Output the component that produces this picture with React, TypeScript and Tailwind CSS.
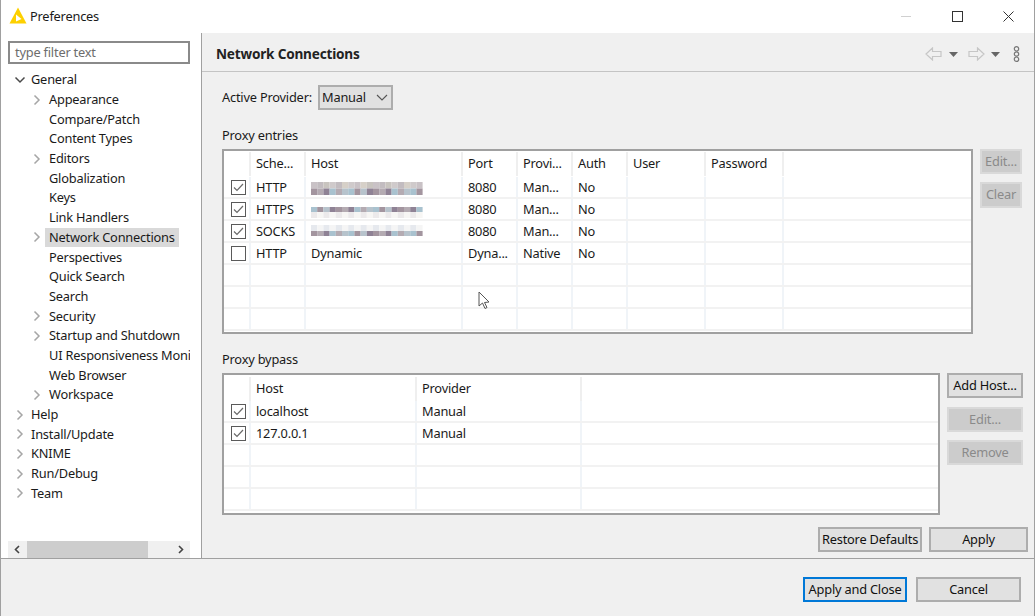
import React from "react";

const font = { fontFamily: '"Noto Sans","Liberation Sans",sans-serif' };

function Chevron({ open = false }: { open?: boolean }) {
  return (
    <svg width="12" height="12" viewBox="0 0 12 12" className="shrink-0">
      {open ? (
        <path d="M1.5 3.5 L6 8 L10.5 3.5" fill="none" stroke="#4a4a4a" strokeWidth="1.5" />
      ) : (
        <path d="M3.5 1.5 L8 6 L3.5 10.5" fill="none" stroke="#a6a6a6" strokeWidth="1.5" />
      )}
    </svg>
  );
}

const tree: { t: string; d: number; c?: boolean; open?: boolean; sel?: boolean }[] = [
  { t: "General", d: 0, c: true, open: true },
  { t: "Appearance", d: 1, c: true },
  { t: "Compare/Patch", d: 1 },
  { t: "Content Types", d: 1 },
  { t: "Editors", d: 1, c: true },
  { t: "Globalization", d: 1 },
  { t: "Keys", d: 1 },
  { t: "Link Handlers", d: 1 },
  { t: "Network Connections", d: 1, c: true, sel: true },
  { t: "Perspectives", d: 1 },
  { t: "Quick Search", d: 1 },
  { t: "Search", d: 1 },
  { t: "Security", d: 1, c: true },
  { t: "Startup and Shutdown", d: 1, c: true },
  { t: "UI Responsiveness Monitoring", d: 1 },
  { t: "Web Browser", d: 1 },
  { t: "Workspace", d: 1, c: true },
  { t: "Help", d: 0, c: true },
  { t: "Install/Update", d: 0, c: true },
  { t: "KNIME", d: 0, c: true },
  { t: "Run/Debug", d: 0, c: true },
  { t: "Team", d: 0, c: true },
];

function Check({ on }: { on: boolean }) {
  return (
    <svg width="15" height="15" viewBox="0 0 15 15" className="shrink-0">
      <rect x="0.5" y="0.5" width="14" height="14" fill="#fff" stroke="#5a5a5a" />
      {on && <path d="M3 7.5 L6 10.5 L12 4" fill="none" stroke="#6a6a6a" strokeWidth="1.2" />}
    </svg>
  );
}

const dark = ["#c9c2c6", "#b4abb2", "#cfcacb", "#a3959f", "#c8c4bf", "#a9c2cf", "#d6d0c8", "#8f8295", "#c2bcc0", "#b7c3cc"];
const light = ["#f3f1f1", "#eceaeb", "#f7f6f4", "#e6e9ee", "#f5f5f5", "#e3edf4", "#f1ede8"];

const bands: { y: number; h: number; pal: string[] }[][] = [
  [
    { y: 4, h: 6.5, pal: dark },
    { y: 10.5, h: 6.5, pal: dark },
  ],
  [
    { y: 7, h: 5, pal: dark },
    { y: 12, h: 6, pal: light },
  ],
  [
    { y: 3, h: 6, pal: light },
    { y: 9, h: 5, pal: dark },
  ],
];

function Mosaic({ seed }: { seed: number }) {
  const cells: React.ReactNode[] = [];
  bands[seed].forEach((b, r) => {
    for (let c = 0; c < 18; c++) {
      const i = (c * 7 + r * 3 + seed * 5 + (c * c) % 4) % b.pal.length;
      cells.push(<rect key={c + "-" + r} x={c * 6.2} y={b.y} width="6.2" height={b.h} fill={b.pal[i]} />);
    }
  });
  return (
    <svg width="112" height="18" viewBox="0 0 112 18" className="block">
      {cells}
    </svg>
  );
}

function Cell({ w, first, children }: { w: number; first: boolean; children?: React.ReactNode }) {
  const isText = typeof children === "string";
  return (
    <div style={{ width: w }} className={`shrink-0 h-full flex items-center overflow-hidden whitespace-nowrap border-r-2 border-[#f0f4f8] ${first ? "pl-[7px]" : "pl-[5px]"} ${isText ? "pt-[1px]" : ""}`}>
      {children}
    </div>
  );
}

function HeaderRow({ widths, labels, low }: { widths: number[]; labels: string[]; low?: boolean }) {
  return (
    <div className={`flex h-[26px] ${low ? "pt-[2px]" : "pt-[1px]"}`}>
      {widths.map((w, i) => (
        <div key={i} style={{ width: w }} className="shrink-0 flex items-center overflow-hidden whitespace-nowrap pl-[5px] h-[24px] border-r-2 border-[#efefef]">
          {labels[i]}
        </div>
      ))}
    </div>
  );
}

function Rows({ widths, rows, count }: { widths: number[]; rows: React.ReactNode[][]; count: number }) {
  const list = [];
  for (let r = 0; r < count; r++) {
    list.push(
      <div key={r} className="flex h-[22px] border-b-2 border-[#f2f2f2]">
        {widths.map((w, i) => (
          <Cell key={i} w={w} first={i === 0}>{rows[r] ? rows[r][i] : null}</Cell>
        ))}
      </div>
    );
  }
  return <>{list}</>;
}

function Btn({ children, w, h = 25, disabled, primary }: { children: React.ReactNode; w: number; h?: number; disabled?: boolean; primary?: boolean }) {
  const cls = disabled
    ? "bg-[#cccccc] border-[#d9d9d9] text-[#8a8a8a]"
    : primary
    ? "bg-[#e1e1e1] border-[#0078d7] text-[#111]"
    : "bg-[#e1e1e1] border-[#adadad] text-[#111]";
  return (
    <div style={{ width: w, height: h }} className={`shrink-0 flex items-center justify-center whitespace-nowrap border-2 ${cls}`}>
      {children}
    </div>
  );
}

const w1 = [27, 55, 157, 55, 55, 55, 78, 78];
const w2 = [27, 166, 165];

export default function App() {
  const entries: React.ReactNode[][] = [
    [<Check on />, "HTTP", <Mosaic seed={0} />, "8080", "Man...", "No"],
    [<Check on />, "HTTPS", <Mosaic seed={1} />, "8080", "Man...", "No"],
    [<Check on />, "SOCKS", <Mosaic seed={2} />, "8080", "Man...", "No"],
    [<Check on={false} />, "HTTP", "Dynamic", "Dyna...", "Native", "No"],
  ];
  const bypass: React.ReactNode[][] = [
    [<Check on />, "localhost", "Manual"],
    [<Check on />, "127.0.0.1", "Manual"],
  ];
  return (
    <div style={font} className="relative w-[1035px] h-[616px] overflow-hidden bg-white border-l border-r border-[#a0a0a0] text-[12.8px] tracking-[-0.2px] text-[#1a1a1a] flex flex-col">
      {/* title bar */}
      <div className="h-[33px] shrink-0 flex items-center bg-white pl-[8px]">
        <svg width="18" height="17" viewBox="0 0 18 17" className="shrink-0 -mt-[2px]">
          <path d="M9 0.5 L17.5 16.5 L0.5 16.5 Z" fill="#fdd000" />
          <path d="M7 7.5 L12.5 12 L7 14.5 Z" fill="#fff" />
        </svg>
        <span className="ml-[3px] pt-[1px]">Preferences</span>
        <div className="ml-auto flex items-center">
          <div className="w-[10px] h-px bg-[#d0d0d0] mr-[41px]" />
          <div className="w-[11px] h-[11px] border border-[#333] mr-[40px]" />
          <svg width="11" height="11" viewBox="0 0 11 11" className="mr-[20px]">
            <path d="M0.5 0.5 L10.5 10.5 M10.5 0.5 L0.5 10.5" stroke="#333" strokeWidth="1" />
          </svg>
        </div>
      </div>

      <div className="flex h-[525px] shrink-0">
        {/* sidebar */}
        <div className="w-[201px] shrink-0 bg-white border-r border-[#a0a0a0] flex flex-col relative">
          <div className="ml-[7px] mt-[8px] w-[182px] h-[23px] shrink-0 border-2 border-[#8a8a8a] flex items-center pl-[5px] pt-[1px] text-[#6d6d6d]">
            type filter text
          </div>
          <div className="mt-[6px] flex-1 overflow-hidden">
            {tree.map((n) => (
              <div key={n.t} className={`h-[19.7px] flex items-center whitespace-nowrap ${n.d ? "pl-[30px]" : "pl-[13px]"}`}>
                <span className={`w-[12px] flex justify-center ${n.d ? "mr-[6px]" : "mr-[5px]"}`}>
                  {n.c && <Chevron open={n.open} />}
                </span>
                <span className={`leading-[19px] ${n.sel ? "bg-[#d9d9d9] w-[134px] pl-[4px] -ml-[4px]" : ""} ${n.t.startsWith("UI") ? "w-[141px] overflow-hidden" : ""}`}>
                  {n.t}
                </span>
              </div>
            ))}
          </div>
          <div className="ml-[7px] w-[182px] h-[17px] shrink-0 bg-[#f0f0f0] flex items-center justify-between">
            <svg width="19" height="17" viewBox="0 0 19 17"><path d="M11 5 L7.5 8.5 L11 12" fill="none" stroke="#444" strokeWidth="1.6" /></svg>
            <div className="w-[121px] h-full bg-[#cdcdcd]" />
            <div className="flex-1" />
            <svg width="19" height="17" viewBox="0 0 19 17"><path d="M8 5 L11.5 8.5 L8 12" fill="none" stroke="#444" strokeWidth="1.6" /></svg>
          </div>
        </div>

        {/* right pane */}
        <div className="flex-1 bg-[#f0f0f0] flex flex-col min-w-0">
          <div className="h-[39px] shrink-0 border-b border-[#c4c4c4] flex items-center pl-[14px] pr-[14px] pt-[4px]">
            <span className="font-bold text-[13.6px] text-[#222]">Network Connections</span>
            <div className="ml-auto flex items-center">
              <svg width="17" height="14" viewBox="0 0 17 14"><path d="M7.5 1 L1 7 L7.5 13 L7.5 9.5 L16 9.5 L16 4.5 L7.5 4.5 Z" fill="none" stroke="#c6c6c6" strokeWidth="1.2" /></svg>
              <svg width="9" height="5" viewBox="0 0 9 5" className="ml-[7px]"><path d="M0 0 L9 0 L4.5 5 Z" fill="#666" /></svg>
              <svg width="17" height="14" viewBox="0 0 17 14" className="ml-[10px]"><path d="M9.5 1 L16 7 L9.5 13 L9.5 9.5 L1 9.5 L1 4.5 L9.5 4.5 Z" fill="none" stroke="#c6c6c6" strokeWidth="1.2" /></svg>
              <svg width="9" height="5" viewBox="0 0 9 5" className="ml-[6px]"><path d="M0 0 L9 0 L4.5 5 Z" fill="#666" /></svg>
              <svg width="7" height="16" viewBox="0 0 7 16" className="ml-[13px]">
                <circle cx="3.5" cy="2.8" r="2.2" fill="none" stroke="#777" strokeWidth="1.2" />
                <circle cx="3.5" cy="8" r="2.2" fill="none" stroke="#777" strokeWidth="1.2" />
                <circle cx="3.5" cy="13.2" r="2.2" fill="none" stroke="#777" strokeWidth="1.2" />
              </svg>
            </div>
          </div>

          <div className="flex items-center mt-[13px] ml-[20px] h-[25px]">
            <span className="w-[96px]">Active Provider:</span>
            <div className="w-[75px] h-[25px] border-2 border-[#adadad] bg-[#e1e1e1] flex items-center justify-between pl-[2px] pr-[3px]">
              <span>Manual</span>
              <svg width="12" height="7" viewBox="0 0 12 7"><path d="M1 1 L6 6 L11 1" fill="none" stroke="#555" strokeWidth="1.1" /></svg>
            </div>
          </div>

          <div className="mt-[15px] ml-[20px] h-[20px] leading-[20px]">Proxy entries</div>

          <div className="flex mt-[4px] ml-[20px]">
            <div className="w-[751px] h-[185px] border-2 border-[#a0a0a0] bg-white overflow-hidden">
              <HeaderRow widths={w1} labels={["", "Sche...", "Host", "Port", "Provi...", "Auth", "User", "Password"]} />
              <Rows widths={w1} rows={entries} count={7} />
            </div>
            <div className="ml-[7px] flex flex-col gap-[8px]">
              <Btn w={42} disabled>Edit...</Btn>
              <Btn w={42} h={26} disabled>Clear</Btn>
            </div>
          </div>

          <div className="mt-[15px] ml-[20px] h-[20px] leading-[20px]">Proxy bypass</div>

          <div className="flex mt-[4px] ml-[20px]">
            <div className="w-[718px] h-[142px] border-2 border-[#a0a0a0] bg-white overflow-hidden">
              <HeaderRow widths={w2} labels={["", "Host", "Provider"]} low />
              <Rows widths={w2} rows={bypass} count={5} />
            </div>
            <div className="ml-[7px] flex flex-col gap-[8px]">
              <Btn w={76}>Add Host...</Btn>
              <div className="mt-[1px]"><Btn w={76} disabled>Edit...</Btn></div>
              <Btn w={76} disabled>Remove</Btn>
            </div>
          </div>

          <div className="flex justify-end gap-[7px] mt-[12px] pr-[6px]">
            <Btn w={104}>Restore Defaults</Btn>
            <Btn w={99}>Apply</Btn>
          </div>
        </div>
      </div>

      {/* footer */}
      <div className="flex-1 bg-[#f0f0f0] border-t border-[#a0a0a0] flex justify-end items-start pt-[18px] pr-[13px] gap-[9px]">
        <Btn w={104} primary>Apply and Close</Btn>
        <Btn w={105}>Cancel</Btn>
      </div>

      {/* mouse cursor over the table */}
      <svg width="13" height="19" viewBox="0 0 13 19" className="absolute left-[477px] top-[291px]">
        <path d="M1 1 L1 15 L4.5 12 L7 17.5 L9 16.5 L6.5 11.5 L11 11 Z" fill="#fff" stroke="#555" strokeWidth="1" />
      </svg>
    </div>
  );
}
